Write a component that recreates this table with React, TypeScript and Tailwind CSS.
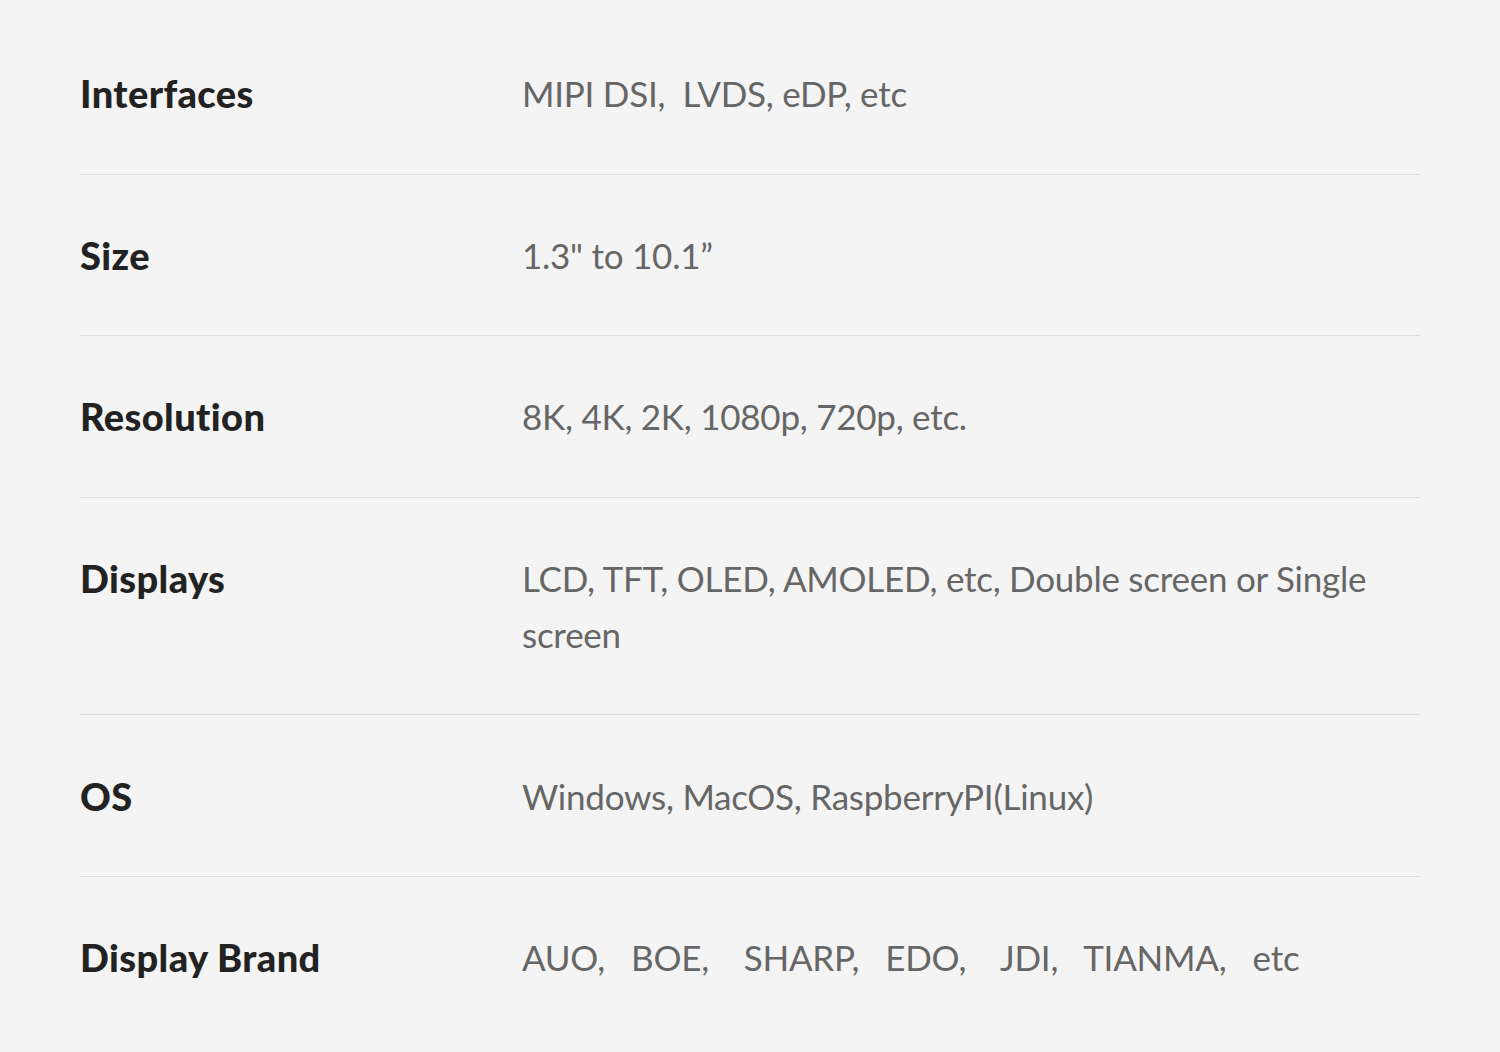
const specs = [
  { label: 'Interfaces', value: 'MIPI DSI,\u00a0\u00a0LVDS, eDP, etc' },
  { label: 'Size', value: '1.3" to 10.1\u201d' },
  { label: 'Resolution', value: '8K, 4K, 2K, 1080p, 720p, etc.' },
  { label: 'Displays', value: 'LCD, TFT, OLED, AMOLED, etc, Double screen or Single screen' },
  { label: 'OS', value: 'Windows, MacOS, RaspberryPI(Linux)' },
  {
    label: 'Display Brand',
    value:
      'AUO,\u00a0\u00a0\u00a0BOE,\u00a0\u00a0\u00a0\u00a0SHARP,\u00a0\u00a0\u00a0EDO,\u00a0\u00a0\u00a0\u00a0JDI,\u00a0\u00a0\u00a0TIANMA,\u00a0\u00a0\u00a0etc',
  },
];

export default function App() {
  return (
    <div className="min-h-screen bg-[#f4f4f4] px-[80px] pt-[13px] pb-4 font-['Lato','Liberation_Sans',sans-serif]">
      {specs.map((spec, i) => (
        <div
          key={spec.label}
          className={
            'grid grid-cols-[442px_1fr] py-[52.3px] ' +
            (i < specs.length - 1 ? 'border-b border-[#dcdcdc]' : '')
          }
        >
          <div className="text-[38px] leading-[56px] font-black tracking-[0.4px] text-[#222222]">
            {spec.label}
          </div>
          <div className="text-[35px] leading-[56px] font-normal tracking-[-0.25px] text-[#666666]">
            {spec.value}
          </div>
        </div>
      ))}
    </div>
  );
}
